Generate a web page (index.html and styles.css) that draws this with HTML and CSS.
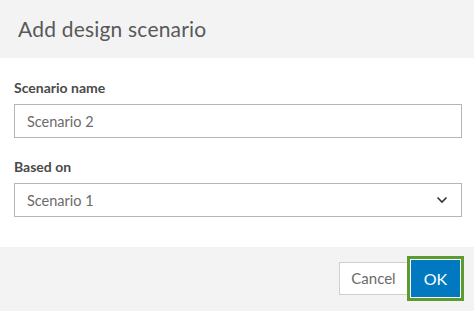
FILE: index.html
```html
<!DOCTYPE html>
<html>
<head>
<meta charset="utf-8">
<link rel="stylesheet" href="styles.css">
</head>
<body>
<div class="dialog">
  <div class="header">
    <h1 class="title">Add design scenario</h1>
  </div>
  <div class="content">
    <label class="label">Scenario name</label>
    <div class="field">Scenario 2</div>
    <label class="label label-second">Based on</label>
    <div class="field select">
      <span>Scenario 1</span>
      <svg class="chevron" width="12" height="8" viewBox="0 0 12 8"><path d="M1.5 1.5 L6 6 L10.5 1.5" fill="none" stroke="#333" stroke-width="1.6"/></svg>
    </div>
  </div>
  <div class="footer">
    <button class="btn btn-cancel">Cancel</button>
    <div class="focus-ring"><button class="btn btn-ok">OK</button></div>
  </div>
</div>
</body>
</html>
```

FILE: styles.css
```css
html, body {
  margin: 0;
  padding: 0;
  background: #ffffff;
}
.dialog {
  width: 474px;
  height: 311px;
  display: flex;
  flex-direction: column;
  font-family: "Lato", "Noto Sans", sans-serif;
}
.header {
  height: 58px;
  background: #f3f3f3;
  display: flex;
  align-items: center;
  padding-left: 18px;
  box-sizing: border-box;
}
.title {
  margin: 0;
  font-size: 21px;
  font-weight: 400;
  color: #595959;
  letter-spacing: 0.2px;
  padding-bottom: 2px;
}
.content {
  height: 189px;
  padding: 21px 12px 0 14px;
  box-sizing: border-box;
  display: flex;
  flex-direction: column;
}
.label {
  font-size: 14px;
  font-weight: 700;
  color: #4a4a4a;
  line-height: 18px;
  margin-bottom: 7px;
}
.label-second {
  margin-top: 20px;
}
.field {
  height: 34px;
  box-sizing: border-box;
  border: 1px solid #b5b5b5;
  padding: 0 12px;
  font-size: 14.5px;
  color: #6b6b6b;
  display: flex;
  align-items: center;
}
.select {
  justify-content: space-between;
  padding-right: 13px;
}
.chevron {
  display: block;
}
.footer {
  flex: 1;
  background: #f3f3f3;
  display: flex;
  justify-content: flex-end;
  align-items: center;
  padding-right: 10px;
  padding-bottom: 2px;
}
.btn {
  font-family: "Lato", "Noto Sans", sans-serif;
  cursor: pointer;
  margin: 0;
}
.btn-cancel {
  height: 33px;
  width: 69px;
  background: #ffffff;
  border: 1px solid #cfcfcf;
  color: #6b6b6b;
  font-size: 15px;
  padding: 0;
}
.focus-ring {
  border: 3px solid #5c9b30;
  padding: 1px;
  background: #ffffff;
  margin-left: -1px;
}
.btn-ok {
  display: block;
  width: 49px;
  height: 37px;
  background: #0079c1;
  border: none;
  color: #ffffff;
  font-size: 16px;
  padding: 0;
}
```
